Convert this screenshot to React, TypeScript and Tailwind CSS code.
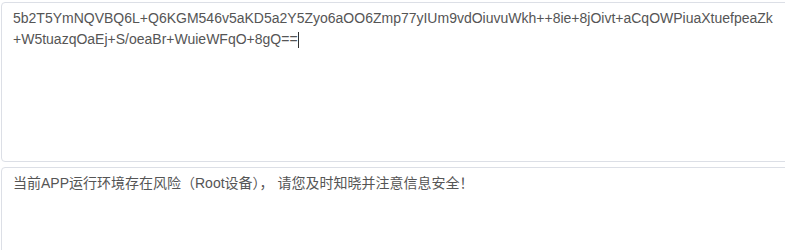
export default function App() {
  return (
    <div className="w-[785px] h-[250px] overflow-hidden bg-white font-['Liberation_Sans','Noto_Sans_CJK_SC',sans-serif] text-[14px] text-[#555]">
      <div className="w-[820px] pl-px pt-[2px] flex flex-col gap-[5px]">
        <div className="h-[160px] rounded-[4px] border border-[#dcdfe6] px-[11px] py-[5px] leading-[21px] whitespace-nowrap">
          <div>5b2T5YmNQVBQ6L+Q6KGM546v5aKD5a2Y5Zyo6aOO6Zmp77yIUm9vdOiuvuWkh++8ie+8jOivt+aCqOWPiuaXtuefpeaZk</div>
          <div className="flex items-center">
            <span>+W5tuazqOaEj+S/oeaBr+WuieWFqO+8gQ==</span>
            <span className="inline-block h-[16px] w-px bg-[#333]" />
          </div>
        </div>
        <div className="h-[120px] rounded-[4px] border border-[#dcdfe6] px-[11px] py-[5px] leading-[21px] whitespace-pre">
          {"当前APP运行环境存在风险（Root设备）， 请您及时知晓并注意信息安全！"}
        </div>
      </div>
    </div>
  );
}
